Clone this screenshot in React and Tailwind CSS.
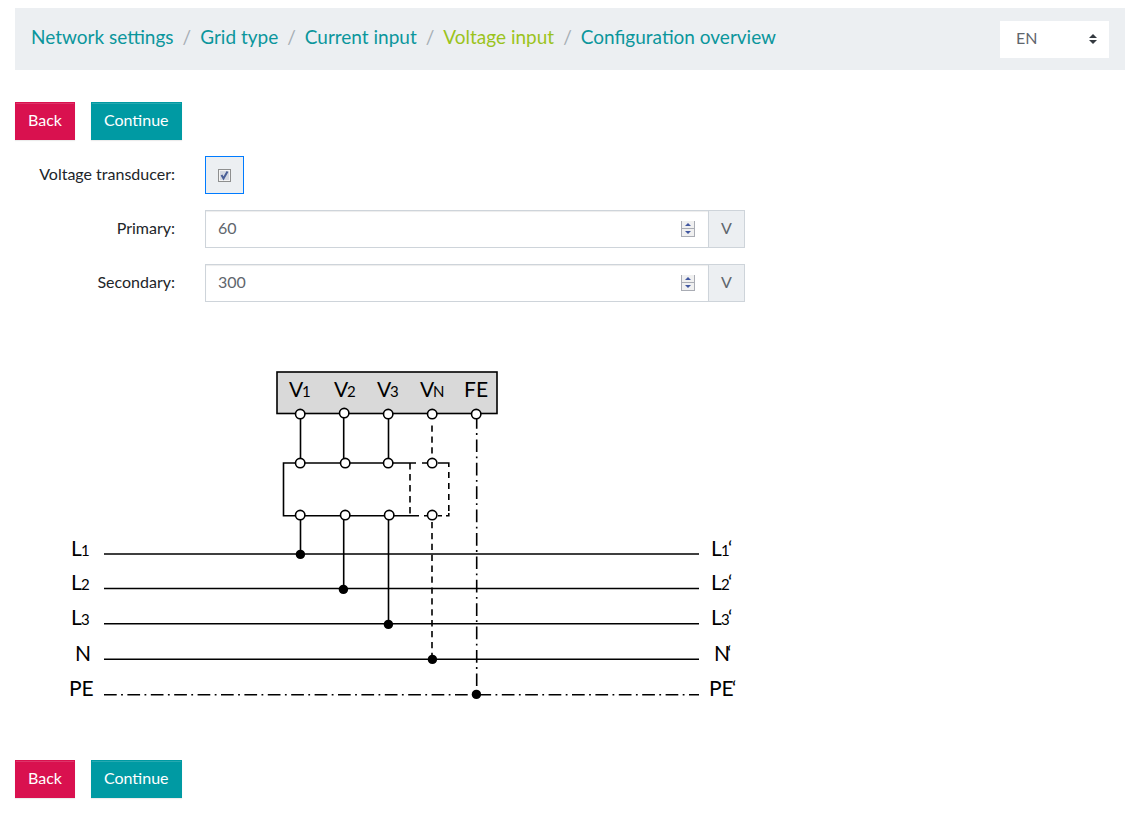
import { useState } from "react";

const STEPS = [
  "Network settings",
  "Grid type",
  "Current input",
  "Voltage input",
  "Configuration overview",
];

function Breadcrumb({ active }) {
  return (
    <nav aria-label="Setup steps">
      <ol className="flex flex-wrap text-[19px] leading-6">
        {STEPS.map((step, i) => (
          <li key={step} className="flex">
            {i > 0 && <span className="px-[9px] text-[#a5adb4]">/</span>}
            <a
              href="#"
              aria-current={step === active ? "step" : undefined}
              className={step === active ? "text-[#9bc31c]" : "text-[#0b969c]"}
            >
              {step}
            </a>
          </li>
        ))}
      </ol>
    </nav>
  );
}

function LanguageSelect() {
  return (
    <div className="grid h-[37px] w-[109px] items-center bg-white">
      <select
        aria-label="Language"
        defaultValue="EN"
        className="col-start-1 row-start-1 h-full w-full appearance-none border-0 bg-transparent px-4 pb-1 text-base text-[#5f666d]"
      >
        <option>EN</option>
        <option>DE</option>
      </select>
      <svg
        viewBox="0 0 8 10"
        className="pointer-events-none col-start-1 row-start-1 mr-3 mb-px h-[10px] w-2 justify-self-end fill-[#343a40]"
        aria-hidden="true"
      >
        <path d="M4 0 0 4h8zM4 10 0 6h8z" />
      </svg>
    </div>
  );
}

function NavButtons() {
  return (
    <div className="flex gap-4">
      <button
        type="button"
        className="h-[38px] border border-[#d9114f] bg-[#d9114f] px-3 pb-[3px] text-base text-white shadow-[inset_0_1px_0_rgba(255,255,255,0.15),0_1px_1px_rgba(0,0,0,0.075)]"
      >
        Back
      </button>
      <button
        type="button"
        className="h-[38px] border border-[#009aa3] bg-[#009aa3] px-3 pb-[3px] text-base text-white shadow-[inset_0_1px_0_rgba(255,255,255,0.15),0_1px_1px_rgba(0,0,0,0.075)]"
      >
        Continue
      </button>
    </div>
  );
}

function FieldRow({ id, label, children }) {
  return (
    <div className="flex h-[38px]">
      <label htmlFor={id} className="w-[160px] shrink-0 pt-[6px] text-right text-base text-[#212529]">
        {label}
      </label>
      <div className="ml-[30px] flex min-w-0 flex-1">{children}</div>
    </div>
  );
}

function VoltageField({ id, label, value, onChange }) {
  const stepBtn = "flex h-[7px] w-[12px] items-center justify-center bg-[#f0f0f0]";
  return (
    <FieldRow id={id} label={label}>
      <div className="grid min-w-0 flex-1 items-center border border-[#ced4da] bg-white shadow-[inset_0_1px_1px_rgba(0,0,0,0.075)]">
        <input
          id={id}
          type="number"
          value={value}
          onChange={(e) => onChange(Number(e.target.value))}
          className="col-start-1 row-start-1 h-full w-full min-w-0 appearance-none bg-transparent pr-12 pb-1 pl-3 text-base text-[#5f666d] outline-none [-moz-appearance:textfield] [&::-webkit-inner-spin-button]:appearance-none"
        />
        <div className="col-start-1 row-start-1 mr-[13px] flex flex-col gap-px justify-self-end border-x border-b border-[#a9acb4] bg-[#a9acb4]">
          <button type="button" aria-label={`Increase ${label}`} className={stepBtn} onClick={() => onChange(value + 1)}>
            <svg viewBox="0 0 6 3" className="h-[3px] w-[6px] fill-[#4157a0]"><path d="M3 0 6 3H0z" /></svg>
          </button>
          <button type="button" aria-label={`Decrease ${label}`} className={stepBtn} onClick={() => onChange(value - 1)}>
            <svg viewBox="0 0 6 3" className="h-[3px] w-[6px] fill-[#4157a0]"><path d="M3 3 0 0h6z" /></svg>
          </button>
        </div>
      </div>
      <span className="w-9 border-y border-r border-[#ced4da] bg-[#eceff2] pt-[5px] text-center text-base text-[#5f666d]">
        V
      </span>
    </FieldRow>
  );
}

const TERMINALS = [
  [300, 414], [344, 413], [388, 414], [432, 414], [476, 414],
  [300, 463], [345, 463], [388, 463], [432, 463],
  [300, 515], [345, 515], [389, 515], [432, 515],
];
const JUNCTIONS = [[300, 554], [343, 589], [388, 624], [432, 659], [476, 694]];
const HEADINGS = [
  { x: 289, main: "V", sub: "1", dx: 302 },
  { x: 334, main: "V", sub: "2", dx: 347 },
  { x: 377, main: "V", sub: "3", dx: 390 },
  { x: 420, main: "V", sub: "N", dx: 433 },
  { x: 464, main: "FE" },
];
const CONDUCTORS = [
  { y: 556, x: 71, main: "L", sub: "1", dx: 81, rx: 711, rdx: 721, px: 728 },
  { y: 590, x: 71, main: "L", sub: "2", dx: 81, rx: 711, rdx: 721, px: 728 },
  { y: 625, x: 71, main: "L", sub: "3", dx: 81, rx: 711, rdx: 721, px: 728 },
  { y: 661, x: 75, main: "N", rx: 714, px: 727 },
  { y: 696, x: 69, main: "PE", rx: 709, px: 732 },
];

function WiringDiagram() {
  return (
    <svg
      viewBox="15 366 740 340"
      role="img"
      aria-label="Voltage transducer wiring"
      className="w-full max-w-[740px]"
      fontFamily="Lato, sans-serif"
      fontSize="21"
    >
      <rect x="277" y="372" width="220" height="41.5" fill="#d9d9d9" stroke="#000" strokeWidth="1.6" />
      <g fill="none" stroke="#000" strokeWidth="1.6">
        <path d="M300.5 414V463M343.7 414V463M388.5 414V463" />
        <path d="M410 463H283.5V515.7H410" />
        <path d="M300.5 515V554M343.7 515V589M388.5 515V624" />
        <path d="M104 554H699M104 588.5H699M104 623.8H699M104 659.2H699" />
        <path d="M410 463V516" strokeDasharray="6.5 4.5" />
        <path d="M410 463H416M422 463H428M438 463H448.8V467M448.8 472V478M448.8 483V489M448.8 494V500M448.8 505V511" />
        <path d="M410 515.7H419M424 515.7H428M438 515.7H442M446 515.7H448.8V513" />
        <path d="M432 425.5V459M432 522V659" strokeDasharray="6.3 4.6" />
        <path d="M476.7 416V694" strokeDasharray="12.7 4.4 1.8 4.5" />
        <path d="M104 694.8H699" strokeDasharray="12.7 4.4 1.8 4.5" />
      </g>
      <g fill="#fff" stroke="#000" strokeWidth="1.6">
        {TERMINALS.map(([x, y]) => (
          <circle key={`${x}-${y}`} cx={x + 0.2} cy={y + 0.1} r="4.7" />
        ))}
      </g>
      {JUNCTIONS.map(([x, y]) => (
        <circle key={y} cx={x + 0.4} cy={y + 0.4} r="4.7" />
      ))}
      {HEADINGS.map((h) => (
        <g key={h.x}>
          <text x={h.x} y="397">{h.main}</text>
          {h.sub && <text x={h.dx} y="397" fontSize="15">{h.sub}</text>}
        </g>
      ))}
      {CONDUCTORS.map((c) => (
        <g key={c.y}>
          <text x={c.x} y={c.y}>{c.main}</text>
          {c.sub && <text x={c.dx} y={c.y} fontSize="15">{c.sub}</text>}
          <text x={c.rx} y={c.y}>{c.main}</text>
          {c.sub && <text x={c.rdx} y={c.y} fontSize="15">{c.sub}</text>}
          <text x={c.px} y={c.y - 1} fontSize="20">‘</text>
        </g>
      ))}
    </svg>
  );
}

export default function App() {
  const [transducer, setTransducer] = useState(true);
  const [primary, setPrimary] = useState(60);
  const [secondary, setSecondary] = useState(300);

  return (
    <div className="px-[15px] pt-2 pb-4 font-[Lato,sans-serif] text-base text-[#212529]">
      <header className="flex items-start justify-between bg-[#eceff2] py-3 pr-4 pl-4">
        <div className="pt-[5px]">
          <Breadcrumb active="Voltage input" />
        </div>
        <div className="pt-px">
          <LanguageSelect />
        </div>
      </header>

      <main className="pt-8">
        <NavButtons />
        <form className="mt-4 flex max-w-[730px] flex-col gap-4" onSubmit={(e) => e.preventDefault()}>
          <FieldRow id="transducer" label="Voltage transducer:">
            <div className="grid w-[39px] place-items-center border border-[#007bff] bg-[#eceff2]">
              <input
                id="transducer"
                type="checkbox"
                checked={transducer}
                onChange={(e) => setTransducer(e.target.checked)}
                className="peer col-start-1 row-start-1 size-[13px] appearance-none border border-[#8e8f8f] bg-[#d5d9e2] shadow-[inset_0_0_0_1px_#f4f4f4]"
              />
              <svg
                viewBox="0 0 13 13"
                className="pointer-events-none invisible col-start-1 row-start-1 size-[13px] fill-none stroke-[#4a5f97] peer-checked:visible"
                strokeWidth="2"
                aria-hidden="true"
              >
                <path d="M3.5 6 5.5 9.5 9.5 2.5" />
              </svg>
            </div>
          </FieldRow>
          <VoltageField id="primary" label="Primary:" value={primary} onChange={setPrimary} />
          <VoltageField id="secondary" label="Secondary:" value={secondary} onChange={setSecondary} />
        </form>
        <div className="mt-16 mb-[54px] flex">
          <WiringDiagram />
        </div>
        <NavButtons />
      </main>
    </div>
  );
}
